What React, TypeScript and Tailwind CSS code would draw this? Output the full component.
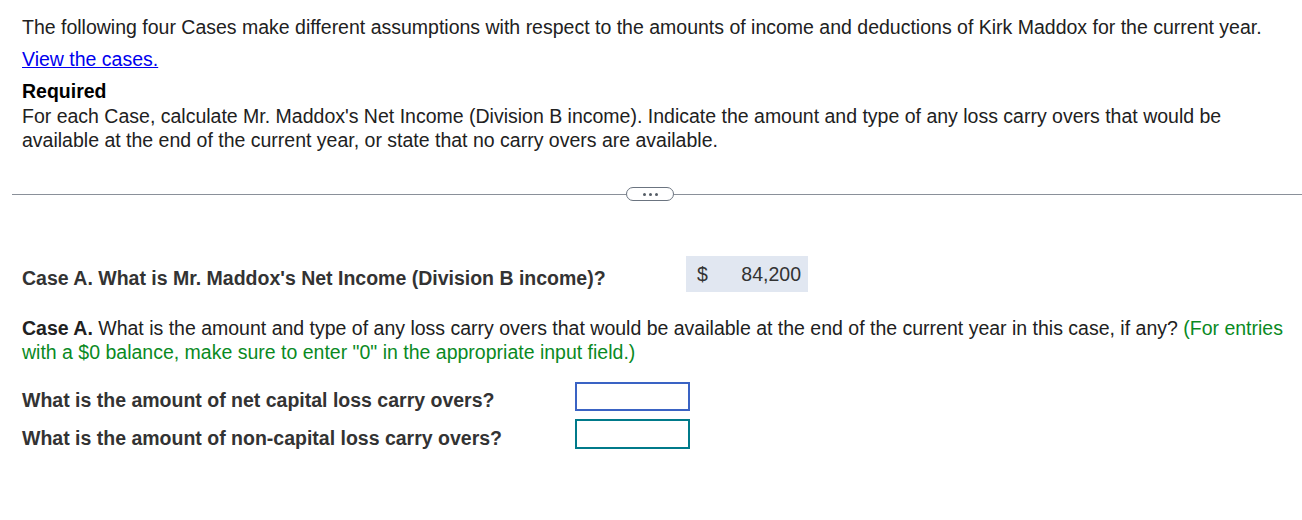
export default function App() {
  return (
    <div className="w-[1302px] h-[520px] bg-white text-[#212121] font-['Liberation_Sans',Arial,sans-serif] text-[19.5px] leading-[24px]">
      {/* intro */}
      <div className="px-[22px] pt-[15px]">
        <p>
          The following four Cases make different assumptions with respect to the amounts of income and deductions of
          Kirk Maddox for the current year.
        </p>
        <p className="mt-[8px]">
          <a href="#" className="text-[#0000ee] underline">
            View the cases.
          </a>
        </p>
        <p className="mt-[8px] font-bold text-black">Required</p>
        <p className="mt-[1px]">
          For each Case, calculate Mr. Maddox's Net Income (Division B income). Indicate the amount and type of any loss
          carry overs that would be available at the end of the current year, or state that no carry overs are
          available.
        </p>
      </div>

      {/* divider */}
      <div className="ml-[12px] mt-[35px] flex items-center">
        <div className="w-[614px] h-px bg-[#8a9099]" />
        <div className="w-[48px] h-[14px] rounded-full border border-[#6b7480] flex items-center justify-center gap-[3px]">
          <span className="w-[3px] h-[3px] rounded-full bg-[#555d66]" />
          <span className="w-[3px] h-[3px] rounded-full bg-[#555d66]" />
          <span className="w-[3px] h-[3px] rounded-full bg-[#555d66]" />
        </div>
        <div className="flex-1 h-px bg-[#8a9099]" />
      </div>

      {/* case A net income */}
      <div className="px-[22px] mt-[55px] flex items-end">
        <p className="w-[664px] font-bold text-[#333] pb-[2px]">Case A. What is Mr. Maddox's Net Income (Division B income)?</p>
        <div className="w-[122px] h-[36px] bg-[#e1e7f1] flex items-center justify-between pl-[11px] pr-[7px] text-[#333]">
          <span>$</span>
          <span>84,200</span>
        </div>
      </div>

      {/* carry overs */}
      <div className="pl-[22px] pr-[12px] mt-[24px]">
        <p>
          <span className="font-bold">Case A.</span> What is the amount and type of any loss carry overs that would be
          available at the end of the current year in this case, if any?{" "}
          <span className="text-[#0a8a1f]">
            (For entries with a $0 balance, make sure to enter "0" in the appropriate input field.)
          </span>
        </p>

        <div className="mt-[24px] flex flex-col gap-[14px]">
          <div className="flex items-start">
            <p className="w-[553px] font-bold text-[#333]">What is the amount of net capital loss carry overs?</p>
            <div className="-mt-[6px] w-[115px] h-[29px] border-2 border-[#3a63c4] bg-white" />
          </div>
          <div className="flex items-start">
            <p className="w-[553px] font-bold text-[#333]">What is the amount of non-capital loss carry overs?</p>
            <div className="-mt-[7px] w-[115px] h-[30px] border-2 border-[#007a8a] bg-white" />
          </div>
        </div>
      </div>
    </div>
  );
}
